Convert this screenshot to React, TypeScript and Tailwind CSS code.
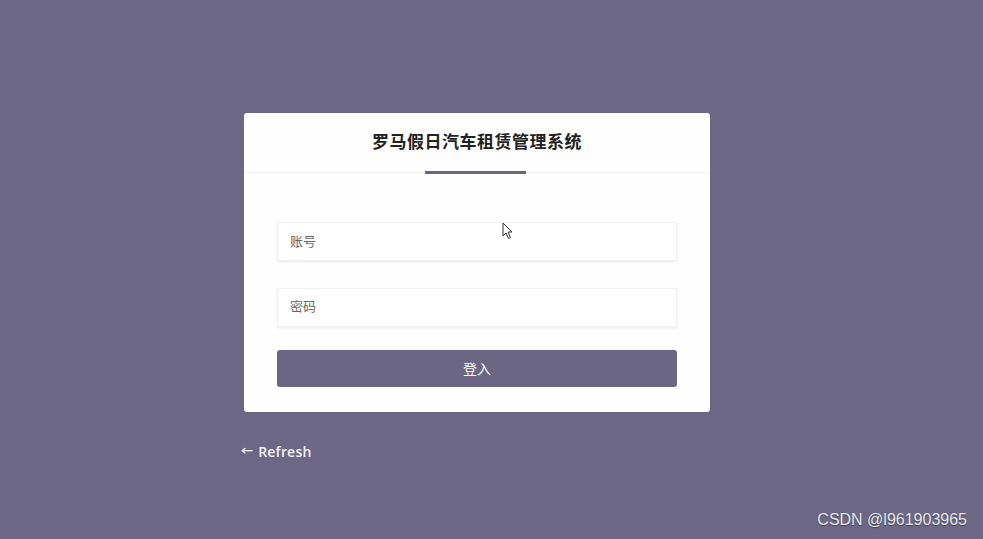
export default function App() {
  return (
    <div
      className="relative h-[539px] w-full overflow-hidden bg-[#6c6784]"
      style={{ fontFamily: '"Open Sans", "Noto Sans CJK SC", sans-serif' }}
    >
      <div className="ml-[244px] pt-[113px] w-[466px]">
        {/* Card */}
        <div className="rounded-[3px] bg-[#fefefe]">
          <div className="relative flex h-[60px] items-center justify-center border-b border-[#f2f2f2]">
            <h1 className="pb-[2px] text-[17px] font-bold tracking-[0.5px] text-[#222]">
              罗马假日汽车租赁管理系统
            </h1>
            <div className="absolute bottom-[-2px] left-[181px] h-[3px] w-[101px] bg-[#6b6783]" />
          </div>
          <div className="flex flex-col px-[33px] pt-[49px] pb-[25px]">
            <div className="flex h-[39px] items-center border border-[#f0f0f0] bg-white pl-[12px] shadow-[0_1px_2px_rgba(0,0,0,0.08)]">
              <span className="text-[13px] text-[#666]">账号</span>
            </div>
            <div className="mt-[27px] flex h-[39px] items-center border border-[#f0f0f0] bg-white pl-[12px] pb-[2px] shadow-[0_1px_2px_rgba(0,0,0,0.08)]">
              <span className="text-[13px] text-[#666]">密码</span>
            </div>
            <button className="mt-[23px] flex h-[37px] items-center justify-center rounded-[3px] bg-[#6a6684] text-[14px] text-white">
              登入
            </button>
          </div>
        </div>
        <div className="mt-[29px] -ml-[3px] flex items-center gap-[5px] text-[14px] font-semibold tracking-[0.2px] text-[#f1f0f5]">
          <span className="text-[12px] font-bold">←</span>
          <span>Refresh</span>
        </div>
      </div>

      {/* Mouse cursor */}
      <svg className="absolute left-[502px] top-[222px]" width="12" height="18" viewBox="0 0 12 18">
        <path d="M1 1 L1 14 L4 11 L6.5 16.5 L8.5 15.5 L6 10 L10 10 Z" fill="#fff" stroke="#333" strokeWidth="1" />
      </svg>

      <div
        className="absolute right-[16px] bottom-[7px] text-[16px] text-[#e6e6ea] [text-shadow:0_1px_1px_rgba(0,0,0,0.4)]"
        style={{ fontFamily: '"Liberation Sans", Arial, sans-serif' }}
      >
        CSDN @l961903965
      </div>
    </div>
  );
}
